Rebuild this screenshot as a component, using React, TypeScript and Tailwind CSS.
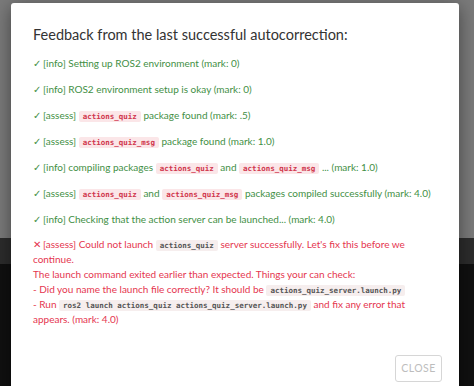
import type { ReactNode } from "react";

const font = { fontFamily: "Lato, 'Noto Sans', sans-serif" };

function Code({ children, muted }: { children: ReactNode; muted?: boolean }) {
  return (
    <code
      className={
        muted
          ? "rounded-[2px] bg-[#f6eeee] px-[4px] py-[1px] text-[7.5px] leading-none font-bold text-[#555]"
          : "rounded-[2px] bg-[#fbe6e8] px-[4px] py-[1px] text-[7.5px] leading-none font-bold text-[#d0354c]"
      }
      style={{ fontFamily: "'DejaVu Sans Mono', monospace" }}
    >
      {children}
    </code>
  );
}

function Ok({ children }: { children: ReactNode }) {
  return (
    <p className="text-[10px] leading-[15px] text-[#3f8f45]">
      <span className="mr-[2px]">✓</span>
      {children}
    </p>
  );
}

export default function App() {
  return (
    <div className="relative h-[386px] w-[474px] overflow-hidden bg-[#111]" style={font}>
      <div className="flex h-full flex-col">
        <div className="h-[238px] bg-[#7a7a7a]" />
        <div className="h-[26px] bg-[#2c2c2c]" />
        <div className="flex-1 bg-[#101010]" />
      </div>

      <div className="absolute left-[11px] top-[3px] h-[400px] w-[448px] rounded-[3px] bg-white shadow-[0_4px_18px_rgba(0,0,0,0.45)]">
        <div className="px-[22px] pt-[22px]">
          <h2 className="text-[14.5px] leading-[20px] text-[#333]">Feedback from the last successful autocorrection:</h2>

          <div className="mt-[11px] flex flex-col gap-[11px]">
            <Ok>[info] Setting up ROS2 environment (mark: 0)</Ok>
            <Ok>[info] ROS2 environment setup is okay (mark: 0)</Ok>
            <Ok>
              [assess] <Code>actions_quiz</Code> package found (mark: .5)
            </Ok>
            <Ok>
              [assess] <Code>actions_quiz_msg</Code> package found (mark: 1.0)
            </Ok>
            <Ok>
              [info] compiling packages <Code>actions_quiz</Code> and <Code>actions_quiz_msg</Code> ... (mark: 1.0)
            </Ok>
            <Ok>
              [assess] <Code>actions_quiz</Code> and <Code>actions_quiz_msg</Code> packages compiled successfully (mark: 4.0)
            </Ok>
            <Ok>[info] Checking that the action server can be launched... (mark: 4.0)</Ok>
            <p className="-mt-px text-[10px] leading-[15px] text-[#e5364f]">
              <span className="mr-[2px]">✕</span>[assess] Could not launch <Code muted>actions_quiz</Code> server
              successfully. Let's fix this before we continue.
              <br />
              The launch command exited earlier than expected. Things your can check:
              <br />- Did you name the launch file correctly? It should be{" "}
              <Code muted>actions_quiz_server.launch.py</Code>
              <br />- Run <Code muted>ros2 launch actions_quiz actions_quiz_server.launch.py</Code> and fix any error
              that appears. (mark: 4.0)
            </p>
          </div>
        </div>

        <div className="absolute left-[384px] top-[351px]">
          <button className="h-[27px] w-[47px] rounded-[3px] border border-[#d6d6d6] bg-white text-[10.5px] tracking-[0.5px] text-[#bdbdbd]">
            CLOSE
          </button>
        </div>
      </div>
    </div>
  );
}
